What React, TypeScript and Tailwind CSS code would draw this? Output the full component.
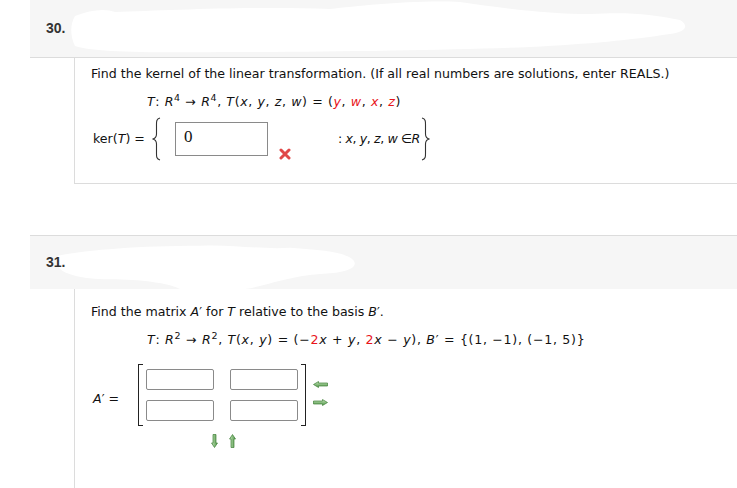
import React from 'react';

function Brace({ flip = false }: { flip?: boolean }) {
  return (
    <svg width="11" height="44" viewBox="0 0 11 44" className={flip ? '-scale-x-100' : ''}>
      <path
        d="M9 1 C5 2 5.5 5 5.5 9 L5.5 17 C5.5 20 4.5 21.5 1.5 22 C4.5 22.5 5.5 24 5.5 27 L5.5 35 C5.5 39 5 42 9 43"
        fill="none"
        stroke="#333"
        strokeWidth="1.1"
      />
    </svg>
  );
}

function RedX() {
  return (
    <svg width="12" height="12" viewBox="0 0 12 12">
      <path d="M2 2 L10 10 M10 2 L2 10" stroke="#e04848" strokeWidth="3" strokeLinecap="round" />
    </svg>
  );
}

function HArrow({ left = false }: { left?: boolean }) {
  const id = left ? 'ga-l' : 'ga-r';
  return (
    <svg width="15" height="7" viewBox="0 0 15 7" className={left ? '-scale-x-100' : ''}>
      <defs>
        <linearGradient id={id} x1="0" y1="0" x2="0" y2="1">
          <stop offset="0" stopColor="#c2e2b8" />
          <stop offset="1" stopColor="#4f9646" />
        </linearGradient>
      </defs>
      <path d="M0.5 2 H9.5 V0.5 L14.5 3.5 L9.5 6.5 V5 H0.5 Z" fill={`url(#${id})`} stroke="#3f7f38" strokeWidth="0.7" />
    </svg>
  );
}

function VArrow({ up = false }: { up?: boolean }) {
  const id = up ? 'ga-u' : 'ga-d';
  return (
    <svg width="7" height="14" viewBox="0 0 7 14" className={up ? '-scale-y-100' : ''}>
      <defs>
        <linearGradient id={id} x1="0" y1="0" x2="1" y2="0">
          <stop offset="0" stopColor="#c2e2b8" />
          <stop offset="1" stopColor="#4f9646" />
        </linearGradient>
      </defs>
      <path d="M2 0.5 V9 H0.5 L3.5 13.5 L6.5 9 H5 V0.5 Z" fill={`url(#${id})`} stroke="#3f7f38" strokeWidth="0.7" />
    </svg>
  );
}

function Cell() {
  return <div className="h-[21px] w-[68px] rounded-[2px] border border-[#8a8a8a] bg-white" />;
}

const red = 'text-[#e8141b]';

export default function App() {
  return (
    <div className="h-[488px] w-[737px] overflow-hidden bg-white font-['DejaVu_Sans',sans-serif] text-[12.6px] text-[#111]">
      {/* question 30 */}
      <div className="relative ml-[30px] flex h-[58px] items-center border-b border-[#dcdcdc] bg-[#f6f6f6] pl-[16px]">
        <svg className="absolute inset-0 h-full w-full" viewBox="0 0 707 57" preserveAspectRatio="none">
          <path
            d="M45 16 C60 10 75 8 85 12 C140 10 230 6 300 9 C330 6 380 0 430 2 C470 8 520 14 560 14 C600 12 620 14 650 20 C660 26 655 32 640 34 C600 40 560 44 500 47 C420 50 300 52 190 52 C120 53 60 52 45 46 C40 36 40 24 45 16 Z"
            fill="#ffffff"
          />
        </svg>
        <span className="relative font-['Liberation_Sans',sans-serif] text-[14px] font-bold text-[#333]">30.</span>
      </div>
      <div className="ml-[74px] h-[126px] border-b border-l border-[#dcdcdc] pl-[16px]">
        <p className="pt-[8px] leading-[16px]">
          Find the kernel of the linear transformation. (If all real numbers are solutions, enter REALS.)
        </p>
        <p className="mt-[12px] pl-[56px] leading-[16px] tracking-[0.6px]">
          <i>T</i>: <i>R</i>
          <sup className="text-[9.5px]">4</sup> → <i>R</i>
          <sup className="text-[9.5px]">4</sup>, <i>T</i>(<i>x</i>, <i>y</i>, <i>z</i>, <i>w</i>) = (
          <i className={red}>y</i>, <i className={red}>w</i>, <i className={red}>x</i>, <i className={red}>z</i>)
        </p>
        <div className="mt-[7px] flex items-center">
          <span className="w-[60px] pl-[2px]">
            ker(<i>T</i>) =
          </span>
          <Brace />
          <div className="ml-[13px] flex h-[34px] w-[93px] items-start border border-[#8a8a8a] pl-[8px] pt-[4px] font-['Liberation_Serif',serif] text-[17px] leading-[20px]">
            0
          </div>
          <div className="ml-[11px] mt-[30px]">
            <RedX />
          </div>
          <span className="ml-[47px] tracking-[-0.4px]">
            : <i>x</i>, <i>y</i>, <i>z</i>, <i>w</i> ∈<i>R</i>
          </span>
          <Brace flip />
        </div>
      </div>

      {/* question 31 */}
      <div className="relative ml-[30px] mt-[51px] flex h-[54px] items-center border-t border-[#dcdcdc] bg-[#f6f6f6] pl-[16px]">
        <svg className="absolute inset-0 h-full w-full" viewBox="0 0 707 54" preserveAspectRatio="none">
          <path
            d="M28 20 C60 14 110 10 170 10 C200 8 230 14 260 12 C290 14 310 16 320 22 C330 28 325 36 300 38 C260 40 240 50 215 54 L150 54 C140 48 110 44 80 44 C50 44 30 38 28 30 Z"
            fill="#ffffff"
          />
        </svg>
        <span className="relative font-['Liberation_Sans',sans-serif] text-[14px] font-bold text-[#333]">31.</span>
      </div>
      <div className="ml-[74px] h-[200px] border-l border-[#dcdcdc] pl-[16px]">
        <p className="pt-[15px] leading-[16px]">
          Find the matrix <i>A</i>′ for <i>T</i> relative to the basis <i>B</i>′.
        </p>
        <p className="mt-[12px] pl-[56px] leading-[16px] tracking-[0.7px]">
          <i>T</i>: <i>R</i>
          <sup className="text-[9.5px]">2</sup> → <i>R</i>
          <sup className="text-[9.5px]">2</sup>, <i>T</i>(<i>x</i>, <i>y</i>) = (−<span className={red}>2</span>
          <i>x</i> + <i>y</i>, <span className={red}>2</span>
          <i>x</i> − <i>y</i>), <i>B</i>′ = {'{'}(1, −1), (−1, 5){'}'}
        </p>
        <div className="mt-[16px] flex items-start">
          <span className="mt-[26px] w-[47px] pl-[2px]">
            <i>A</i>′ =
          </span>
          <div className="flex flex-col items-center">
            <div className="flex">
              <div className="w-[5px] border-y border-l border-[#222]" />
              <div className="grid grid-cols-2 gap-x-[16px] gap-y-[10px] px-[3px] py-[5px]">
                <Cell />
                <Cell />
                <Cell />
                <Cell />
              </div>
              <div className="w-[5px] border-y border-r border-[#222]" />
            </div>
            <div className="mt-[8px] flex gap-[11px] pl-[2px]">
              <VArrow />
              <VArrow up />
            </div>
          </div>
          <div className="ml-[7px] mt-[17px] flex flex-col gap-[11px]">
            <HArrow left />
            <HArrow />
          </div>
        </div>
      </div>
    </div>
  );
}
